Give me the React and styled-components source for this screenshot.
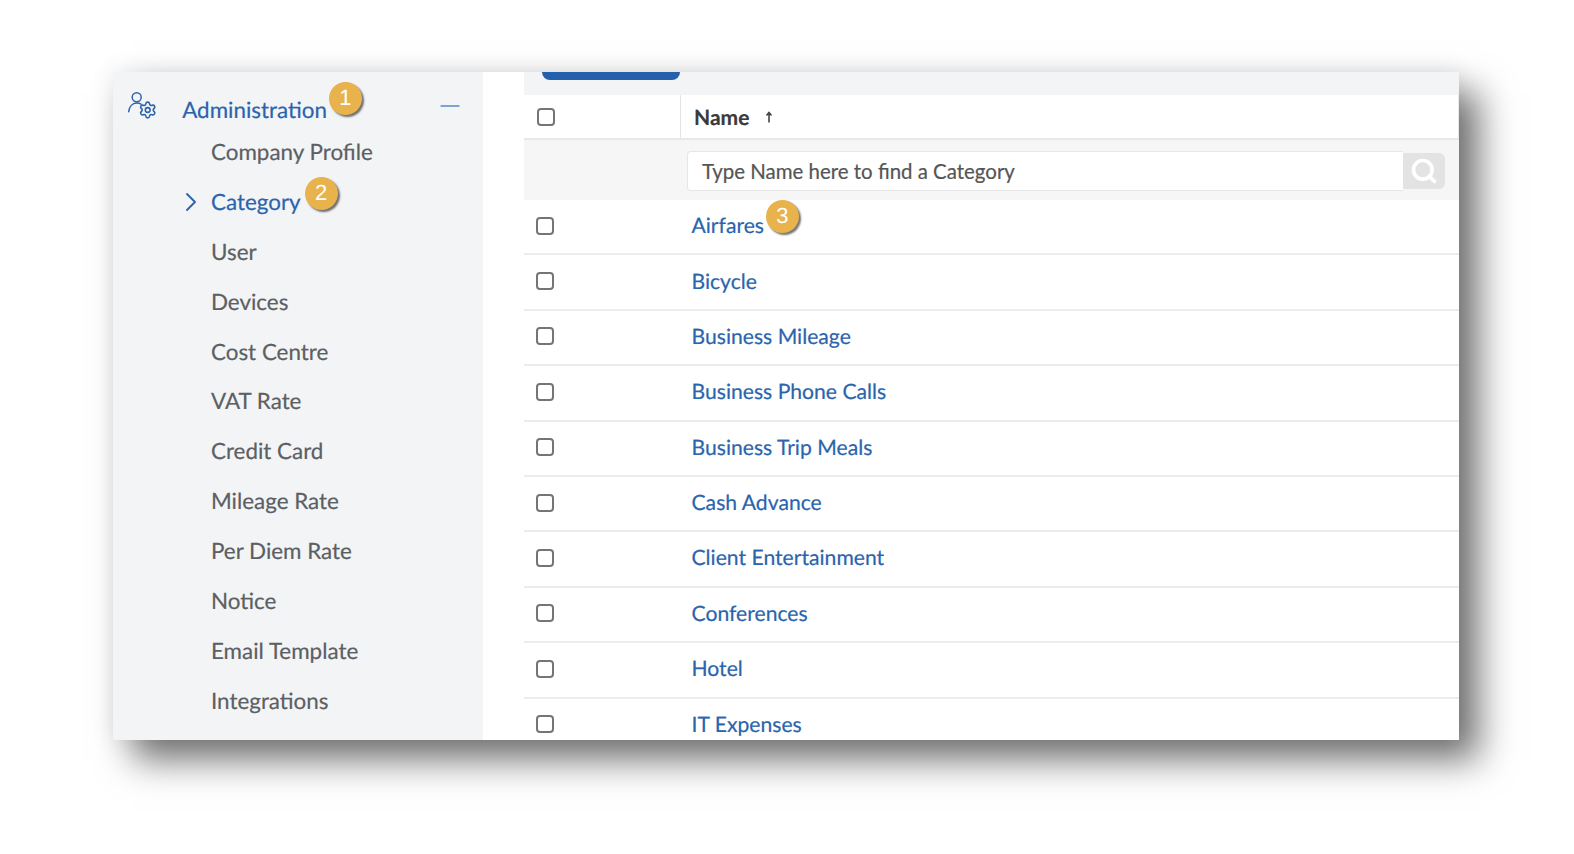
import React from 'react'
import styled, {createGlobalStyle} from "styled-components";
import {ChevronRight, Minus, Search, Settings} from "lucide-react";

const GlobalStyle = createGlobalStyle`
  * { box-sizing: border-box; }
  html, body { margin: 0; height: 100%; background: #fff; }
  body {
    font-family: "Lato", "Liberation Sans", sans-serif;
    overflow: hidden;
    text-rendering: geometricPrecision;
    -webkit-text-stroke: 0.2px;
  }
`;

const menuItems = [
  "Company Profile", "Category", "User", "Devices", "Cost Centre", "VAT Rate",
  "Credit Card", "Mileage Rate", "Per Diem Rate", "Notice", "Email Template", "Integrations",
];

const categories = [
  "Airfares", "Bicycle", "Business Mileage", "Business Phone Calls", "Business Trip Meals",
  "Cash Advance", "Client Entertainment", "Conferences", "Hotel", "IT Expenses",
];

const AdminIcon = () => (
  <AdminSvg viewBox="0 0 30 30" fill="none" stroke="currentColor" strokeWidth="1.5" strokeLinecap="round">
    <circle cx="9.7" cy="7.3" r="4.5" />
    <path d="M1.7 21.7c.6-5 3.6-8.6 8-8.6 1.6 0 3 .3 4.4 1" />
    <Settings x="11.2" y="10.5" width="19" height="19" strokeWidth="2" />
  </AdminSvg>
);

const SortArrow = () => (
  <ArrowSvg viewBox="0 0 8 12" fill="none" stroke="currentColor" strokeWidth="1.6">
    <path d="M4 11.5V1.5M1.5 4.5 4 1.5l2.5 3" />
  </ArrowSvg>
);

const App = () => {
  return (
    <Page>
      <GlobalStyle />
      <Window>
        <Sidebar>
          <MenuHeader>
            <AdminIcon />
            <HeaderLabel>
              Administration
              <Badge $right={-35} $top={-17.5}>1</Badge>
            </HeaderLabel>
            <Collapse><Minus size={30} strokeWidth={1.5} /></Collapse>
          </MenuHeader>
          {menuItems.map((item) => (
            <MenuItem key={item} $active={item === "Category"}>
              {item === "Category" && <Arrow><ChevronRight size={32} strokeWidth={1.4} /></Arrow>}
              <ItemLabel>
                {item}
                {item === "Category" && <Badge $right={-37} $top={-14}>2</Badge>}
              </ItemLabel>
            </MenuItem>
          ))}
        </Sidebar>

        <Content>
          <Toolbar>
            <AddButton />
          </Toolbar>
          <HeadRow>
            <HeadCheckCell>
              <Check type="checkbox" />
            </HeadCheckCell>
            <HeadName>
              Name
              <SortArrow />
            </HeadName>
          </HeadRow>
          <FilterRow>
            <FilterInput placeholder="Type Name here to find a Category" />
            <FilterButton><Search size={28} strokeWidth={3.2} /></FilterButton>
          </FilterRow>
          {categories.map((name) => (
            <Row key={name}>
              <CheckCell>
                <Check type="checkbox" />
              </CheckCell>
              <RowLabel>
                {name}
                {name === "Airfares" && <Badge $right={-35} $top={-15.5}>3</Badge>}
              </RowLabel>
            </Row>
          ))}
        </Content>
      </Window>
    </Page>
  )
}

const Page = styled.div`
  padding: 72px 0 0 113px;
  height: 100vh;
`;

const Window = styled.div`
  display: flex;
  width: 1346px;
  height: 668px;
  overflow: hidden;
  background: #fff;
  box-shadow: 20px 20px 34px rgba(0, 0, 0, 0.55), 0 0 24px rgba(0, 0, 0, 0.08);
`;

const Sidebar = styled.aside`
  flex: 0 0 370px;
  background: #f3f4f6;
  font-size: 22.4px;
`;

const MenuHeader = styled.div`
  display: flex;
  align-items: center;
  height: 55.5px;
  padding: 19px 0 0 14px;
  color: #2a64ad;
`;

const AdminSvg = styled.svg`
  width: 30px;
  height: 30px;
  margin: -8px 25.2px 0 0;
  flex: none;
`;

const ArrowSvg = styled.svg`
  width: 8px;
  height: 12px;
  color: #444;
`;

const HeaderLabel = styled.span`
  position: relative;
  margin-top: 2px;
  line-height: 1;
`;

const Collapse = styled.span`
  display: flex;
  margin: -6px 0 0 auto;
  padding-right: 18px;
  color: #7da3d1;
`;

const MenuItem = styled.div`
  position: relative;
  display: flex;
  align-items: center;
  height: 49.85px;
  padding-left: 98px;
  color: ${({$active}) => ($active ? "#2a64ad" : "#5c5f63")};
`;

const Arrow = styled.span`
  position: absolute;
  left: 62px;
  top: 50%;
  margin-top: -16px;
  display: flex;
`;

const ItemLabel = styled.span`
  position: relative;
  line-height: 1;
`;

const Badge = styled.span`
  position: absolute;
  right: ${({$right}) => $right}px;
  top: ${({$top}) => $top}px;
  width: 33px;
  height: 33px;
  border-radius: 50%;
  background: #e8b24c;
  color: #fff;
  font: 22px/32px "Liberation Sans", sans-serif;
  text-align: center;
  -webkit-text-stroke: 0;
  box-shadow: 2px 2px 2px rgba(0, 0, 0, 0.55);
`;

const Content = styled.main`
  flex: 1;
  min-width: 0;
  padding-left: 41px;
  font-size: 21.15px;
`;

const Toolbar = styled.div`
  height: 23px;
  padding-left: 18px;
  background: #f3f4f6;
`;

const AddButton = styled.div`
  width: 138px;
  height: 8px;
  background: #2460ab;
  border-radius: 0 0 24px 24px;
`;

const HeadRow = styled.div`
  display: flex;
  height: 45px;
  border-bottom: 2px solid #e8e8e8;
  border-right: 1px solid #e8e8e8;
`;

const HeadCheckCell = styled.div`
  display: flex;
  align-items: center;
  flex: 0 0 157px;
  padding-left: 12.6px;
  border-right: 1px solid #e4e4e4;
`;

const HeadName = styled.div`
  display: flex;
  align-items: center;
  gap: 16px;
  padding: 1.5px 0 0 13px;
  color: #3a3a3a;
  font-size: 21px;
  font-weight: 700;
`;

const FilterRow = styled.div`
  display: flex;
  align-items: center;
  height: 60px;
  padding: 2px 14px 0 163px;
  background: #f6f6f6;
`;

const FilterInput = styled.input`
  flex: 1;
  height: 39.5px;
  padding: 0 14px;
  border: 1px solid #e6e6e6;
  border-right: 0;
  border-radius: 4px 0 0 4px;
  background: #fff;
  font-family: inherit;
  font-size: 20.45px;
  outline: 0;

  &::placeholder {
    color: #555;
    opacity: 1;
  }
`;

const FilterButton = styled.div`
  display: flex;
  align-items: center;
  justify-content: center;
  flex: 0 0 42px;
  height: 36px;
  border-radius: 0 6px 6px 0;
  background: #e3e3e3;
  color: #fff;
`;

const Row = styled.div`
  display: flex;
  align-items: center;
  height: 55.4px;
  padding-bottom: 2px;
  border-bottom: 2px solid #ececec;
  color: #2a64ad;
`;

const CheckCell = styled.div`
  display: flex;
  flex: 0 0 167.5px;
  padding-left: 12.2px;
`;

const RowLabel = styled.span`
  position: relative;
  line-height: 1;
`;

const Check = styled.input`
  appearance: none;
  width: 18px;
  height: 18px;
  margin: 0;
  border: 2px solid #757575;
  border-radius: 4px;
  background: #fff;
`;

export default App
